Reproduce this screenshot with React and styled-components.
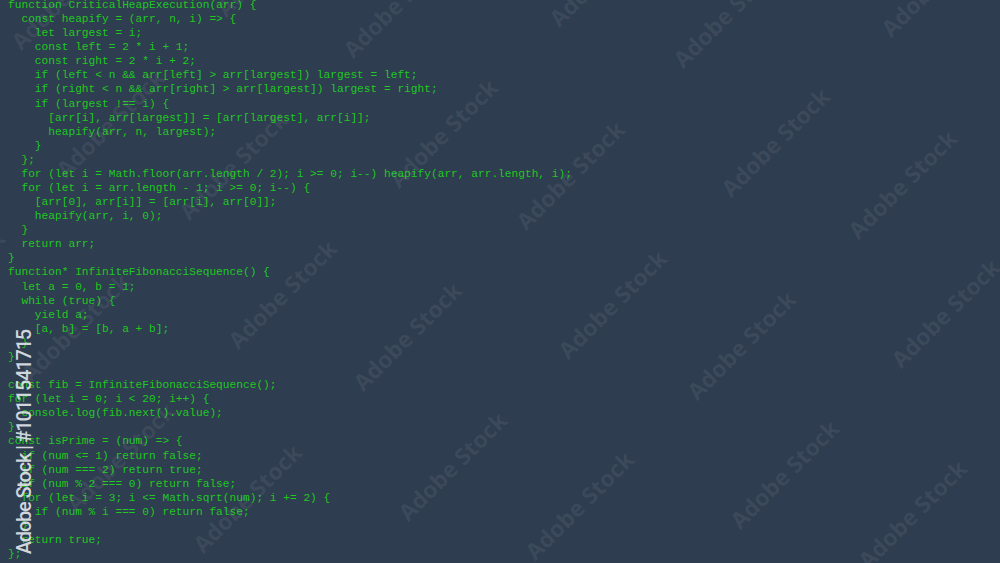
import React from "react";
import styled, { createGlobalStyle } from "styled-components";

const GlobalStyle = createGlobalStyle`
  html, body {
    margin: 0;
    padding: 0;
    background: #2e3d50;
    overflow: hidden;
  }
`;

const Screen = styled.div`
  position: relative;
  width: 1000px;
  height: 563px;
  overflow: hidden;
  background: #2e3d50;
`;

const Code = styled.pre`
  margin: -2px 0 0 0;
  padding: 0 0 0 8px;
  font-family: "Liberation Mono", "Courier New", monospace;
  font-size: 11.2px;
  line-height: 14.08px;
  color: #20c820;
  white-space: pre;
`;

const Marks = styled.div`
  position: absolute;
  inset: 0;
  pointer-events: none;
`;

const Mark = styled.span`
  position: absolute;
  left: ${(p) => p.$x}px;
  top: ${(p) => p.$y}px;
  transform: translate(-50%, -50%) rotate(-45deg);
  font-family: "Open Sans", "Liberation Sans", sans-serif;
  font-weight: 700;
  font-size: 23px;
  white-space: nowrap;
  color: rgba(255, 255, 255, 0.07);
`;

const StockId = styled.div`
  position: absolute;
  left: 12px;
  bottom: 9px;
  writing-mode: vertical-rl;
  transform: rotate(180deg);
  font-family: "Roboto", "Liberation Sans", sans-serif;
  font-weight: 500;
  font-size: 20px;
  letter-spacing: -1.2px;
  white-space: nowrap;
  color: rgba(232, 236, 240, 0.88);
`;

const code = `function CriticalHeapExecution(arr) {
  const heapify = (arr, n, i) => {
    let largest = i;
    const left = 2 * i + 1;
    const right = 2 * i + 2;
    if (left < n && arr[left] > arr[largest]) largest = left;
    if (right < n && arr[right] > arr[largest]) largest = right;
    if (largest !== i) {
      [arr[i], arr[largest]] = [arr[largest], arr[i]];
      heapify(arr, n, largest);
    }
  };
  for (let i = Math.floor(arr.length / 2); i >= 0; i--) heapify(arr, arr.length, i);
  for (let i = arr.length - 1; i >= 0; i--) {
    [arr[0], arr[i]] = [arr[i], arr[0]];
    heapify(arr, i, 0);
  }
  return arr;
}
function* InfiniteFibonacciSequence() {
  let a = 0, b = 1;
  while (true) {
    yield a;
    [a, b] = [b, a + b];
  }
}

const fib = InfiniteFibonacciSequence();
for (let i = 0; i < 20; i++) {
  console.log(fib.next().value);
}
const isPrime = (num) => {
  if (num <= 1) return false;
  if (num === 2) return true;
  if (num % 2 === 0) return false;
  for (let i = 3; i <= Math.sqrt(num); i += 2) {
    if (num % i === 0) return false;
  }
  return true;
};`;

// watermark centres, read off the reference
const marks = [
  [270, -38], [603, -28], [935, -18],
  [65, -5], [397, 3], [727, 13],
  [110, 123], [443, 133], [775, 142],
  [233, 165], [570, 175], [902, 184],
  [-50, 284], [282, 294], [612, 304], [945, 313],
  [75, 327], [407, 336], [741, 345],
  [120, 457], [452, 466], [784, 474],
  [-85, 488], [247, 498], [579, 505], [912, 514],
];

export default function App() {
  return (
    <Screen>
      <GlobalStyle />
      <Code>{code}</Code>
      <Marks>
        {marks.map(([x, y], i) => (
          <Mark key={i} $x={x} $y={y}>
            Adobe Stock
          </Mark>
        ))}
      </Marks>
      <StockId>Adobe Stock | #1011541715</StockId>
    </Screen>
  );
}
